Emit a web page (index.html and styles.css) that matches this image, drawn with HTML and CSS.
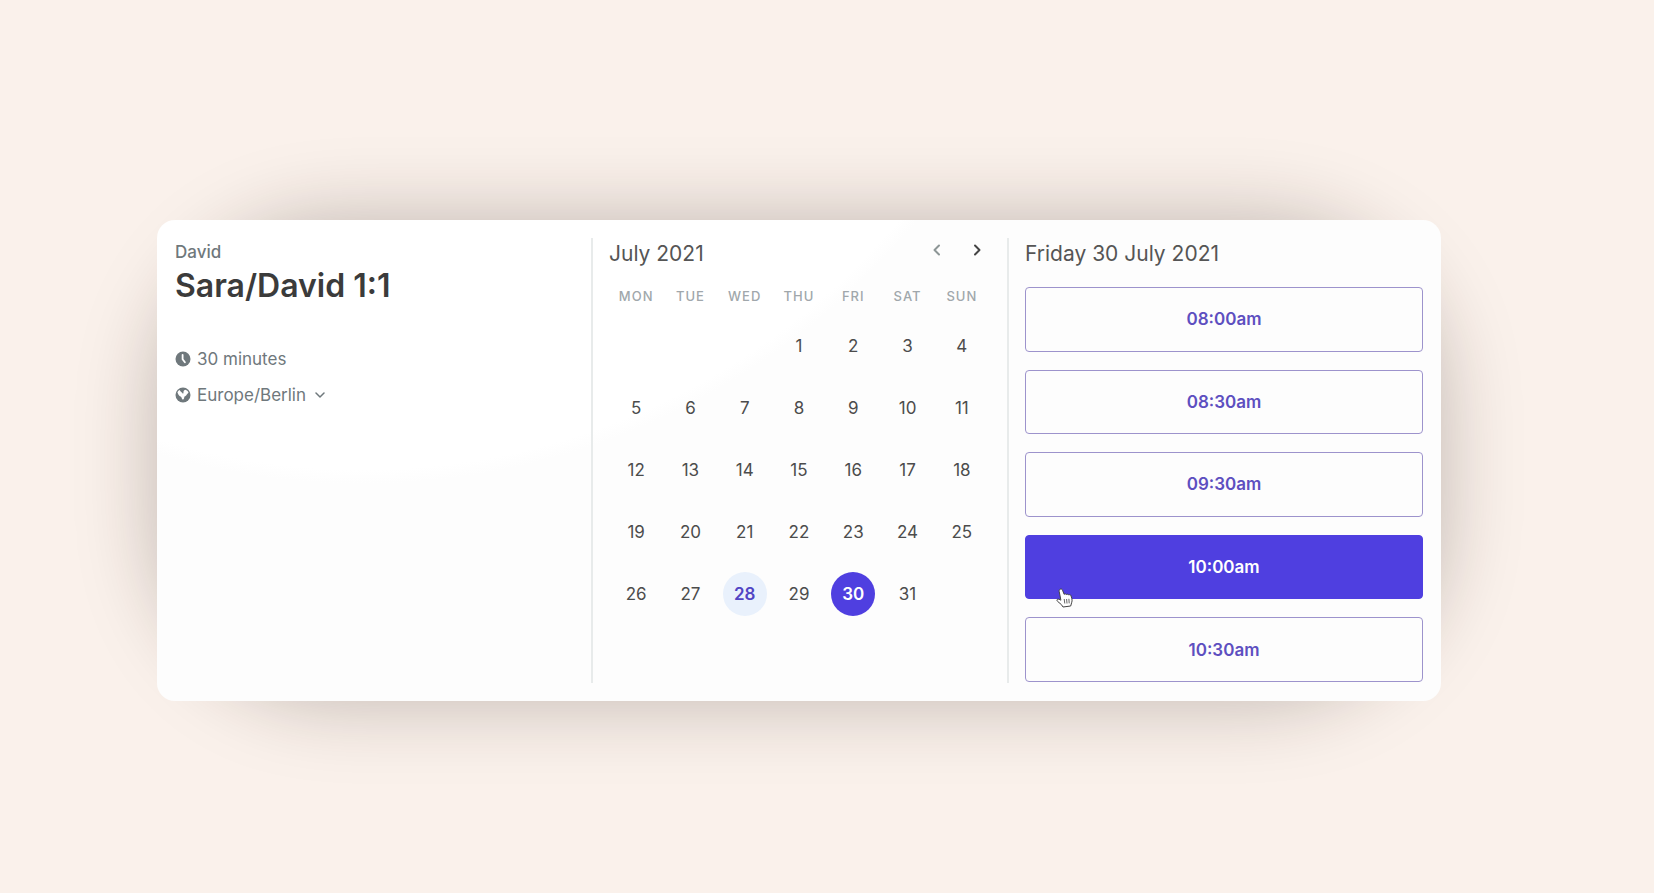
FILE: index.html
```html
<!DOCTYPE html>
<html lang="en">

<head>
  <meta charset="UTF-8">
  <meta name="viewport" content="width=device-width, initial-scale=1.0">
  <title>Sara/David 1:1</title>
  <link rel="stylesheet" href="styles.css">
</head>

<body>
  <main class="booking">
    <section class="details">
      <p class="host">David</p>
      <h1 class="title">Sara/David 1:1</h1>
      <p class="meta">
        <svg class="icon" viewBox="0 0 16 16" aria-hidden="true">
          <circle cx="8" cy="8" r="7.5" fill="currentColor"/>
          <path d="M7.6 3.8v4.4l2.3 3" fill="none" stroke="#fff" stroke-width="1.8" stroke-linecap="round" stroke-linejoin="round"/>
        </svg>
        30 minutes
      </p>
      <div class="meta">
        <svg class="icon" viewBox="0 0 16 16" aria-hidden="true">
          <circle cx="8" cy="8" r="7.5" fill="currentColor"/>
          <path d="M2.4 5.2c.6-1 1.4-1.7 2.3-2.1.4.8 1 1.7 1.8 2.2.7.5 1.3.9 1.5 1.6.5-.8.6-1.5.5-2.2.1-.9.9-1.7 1.9-1.9 1.4.5 2.5 1.4 3.1 2.7-.3.9-1.2 1.2-1.7 2-.5.9-1.3 1.7-2.3 1.9-.4 1.1-.3 2.4-1.3 3.2-1 .1-1.3-1-1.6-1.9-.4-1-1.5-1.2-2.3-1.9-.8-.9-1.5-2.1-1.9-3.6z" fill="#fff"/>
        </svg>
        <label class="zone">
          <select class="zone-select" aria-label="Time zone">
            <option>Europe/Berlin</option>
          </select>
          <svg class="caret" viewBox="0 0 10 10" aria-hidden="true">
            <path d="M1 3l4 4 4-4"/>
          </svg>
        </label>
      </div>
    </section>

    <section class="calendar">
      <header class="calendar-header">
        <h2 class="heading">July 2021</h2>
        <div class="nav">
          <button class="nav-button previous" aria-label="Previous month">
            <svg class="arrow" viewBox="0 0 12 12"><path d="M8 1.5L3.5 6 8 10.5"/></svg>
          </button>
          <button class="nav-button next" aria-label="Next month">
            <svg class="arrow" viewBox="0 0 12 12"><path d="M4 1.5L8.5 6 4 10.5"/></svg>
          </button>
        </div>
      </header>
      <table class="month">
        <thead>
          <tr><th>MON</th><th>TUE</th><th>WED</th><th>THU</th><th>FRI</th><th>SAT</th><th>SUN</th></tr>
        </thead>
        <tbody>
          <tr>
            <td></td>
            <td></td>
            <td></td>
            <td><button class="day">1</button></td>
            <td><button class="day">2</button></td>
            <td><button class="day">3</button></td>
            <td><button class="day">4</button></td>
          </tr>
          <tr>
            <td><button class="day">5</button></td>
            <td><button class="day">6</button></td>
            <td><button class="day">7</button></td>
            <td><button class="day">8</button></td>
            <td><button class="day">9</button></td>
            <td><button class="day">10</button></td>
            <td><button class="day">11</button></td>
          </tr>
          <tr>
            <td><button class="day">12</button></td>
            <td><button class="day">13</button></td>
            <td><button class="day">14</button></td>
            <td><button class="day">15</button></td>
            <td><button class="day">16</button></td>
            <td><button class="day">17</button></td>
            <td><button class="day">18</button></td>
          </tr>
          <tr>
            <td><button class="day">19</button></td>
            <td><button class="day">20</button></td>
            <td><button class="day">21</button></td>
            <td><button class="day">22</button></td>
            <td><button class="day">23</button></td>
            <td><button class="day">24</button></td>
            <td><button class="day">25</button></td>
          </tr>
          <tr>
            <td><button class="day">26</button></td>
            <td><button class="day">27</button></td>
            <td><button class="day today">28</button></td>
            <td><button class="day">29</button></td>
            <td><button class="day selected">30</button></td>
            <td><button class="day">31</button></td>
            <td></td>
          </tr>
        </tbody>
      </table>
    </section>

    <section class="times">
      <h2 class="heading">Friday 30 July 2021</h2>
      <div class="slots">
        <button class="slot">08:00am</button>
        <button class="slot">08:30am</button>
        <button class="slot">09:30am</button>
        <button class="slot active">
          10:00am
          <svg class="pointer" viewBox="0 0 18 20" aria-hidden="true">
            <path d="M4.2 1.2c1-.5 1.9 0 2.3 1l1.7 4.2c.6-.8 1.8-.7 2.2.2.7-.7 1.9-.5 2.3.4.8-.6 2-.3 2.3.8l.9 3c.4 1.5.2 2.7-.3 4l-.9 3.2-7.7 1-1.6-2.4-3.9-3.3c-1.4-1.3.1-2.8 1.5-2.1l1.9 1-1.7-8.7c-.2-1 .1-1.9 1-2.3z" fill="#fff" stroke="#444" stroke-width="1"/>
            <path d="M8.2 11l.6 4.5M10.6 11l.4 4.5M12.9 10.8l.3 4.5" stroke="#666" stroke-width="1" fill="none"/>
          </svg>
        </button>
        <button class="slot">10:30am</button>
      </div>
    </section>
  </main>
</body>

</html>
```

FILE: styles.css
```css
* {
  margin: 0;
  padding: 0;
  box-sizing: border-box;
  font-family: Inter, 'Liberation Sans', sans-serif;
}

body {
  display: grid;
  min-height: 100vh;
  padding: 220px 213px 192px 157px;
  background: #faf1eb;
}

.booking {
  position: relative;
  display: grid;
  grid-template-columns: repeat(3, 1fr);
  padding: 18px;
  border-radius: 18px;
  background: radial-gradient(circle 716px at 16% -94%, #fff 98%, #fdfdfd 100%);
}

/* soft shadow, rounder than the card so it fades out at the corners */
.booking::before {
  content: '';
  position: absolute;
  inset: 0;
  z-index: -1;
  border-radius: 180px;
  box-shadow: 0 0 80px rgba(40, 25, 20, 0.27);
}

button {
  border: none;
  background: none;
  cursor: pointer;
}

/* Details */
.details {
  color: #6f787c;
}

.host {
  font-size: 17px;
  font-weight: 500;
  line-height: 28px;
}

.title {
  margin-bottom: 38px;
  color: #3b3b3b;
  font-size: 32px;
  font-weight: 600;
  line-height: 40px;
}

.meta {
  display: flex;
  align-items: center;
  gap: 6px;
  height: 30px;
  margin-bottom: 6px;
  font-size: 17px;
}

.icon {
  width: 16px;
  height: 16px;
}

.zone {
  display: flex;
  align-items: center;
  gap: 8px;
}

.zone-select {
  appearance: none;
  border: none;
  background: none;
  color: inherit;
  font-size: 17px;
}

.caret {
  width: 10px;
  height: 10px;
}

.caret path,
.arrow path {
  fill: none;
  stroke: currentColor;
  stroke-width: 1.5;
  stroke-linecap: round;
  stroke-linejoin: round;
}

/* Calendar */
.calendar,
.times {
  padding-left: 16px;
  border-left: 2px solid #e8ebeb;
}

.calendar {
  padding-right: 18px;
}

.calendar-header {
  display: flex;
  justify-content: space-between;
}

.heading {
  color: #555;
  font-size: 21px;
  font-weight: 400;
  line-height: 32px;
}

.nav {
  display: flex;
  gap: 16px;
}

.nav-button {
  display: flex;
  justify-content: center;
  align-items: center;
  width: 24px;
  height: 24px;
  color: #444;
}

.nav-button.previous {
  color: #8d9696;
}

.arrow {
  width: 12px;
  height: 12px;
}

.arrow path {
  stroke-width: 2;
}

.month {
  width: 100%;
  margin-top: 7px;
  border-collapse: collapse;
  table-layout: fixed;
}

.month th {
  height: 38px;
  color: #a0a7ab;
  font-size: 13px;
  font-weight: 500;
  letter-spacing: 1px;
}

.month td {
  height: 62px;
  text-align: center;
}

.day {
  width: 44px;
  height: 44px;
  border-radius: 50%;
  color: #4c4c4c;
  font-size: 17px;
}

.day.today {
  background: #e9f1fc;
  color: #5144c4;
  font-weight: 600;
}

.day.selected {
  background: #4f3fe0;
  color: #fff;
  font-weight: 600;
}

/* Time slots */
.times {
  display: flex;
  flex-direction: column;
  gap: 17px;
  padding-bottom: 1px;
}

.slots {
  display: flex;
  flex: 1;
  flex-direction: column;
  gap: 18px;
}

.slot {
  position: relative;
  flex: 1;
  min-height: 64px;
  border: 1px solid #9d93cc;
  border-radius: 4px;
  color: #5d4fc0;
  font-size: 17px;
  font-weight: 600;
}

.slot.active {
  border-color: #4f3fe0;
  background: #4f3fe0;
  color: #fff;
}

.pointer {
  position: absolute;
  bottom: -10px;
  left: 30px;
  width: 18px;
  height: 20px;
}

@media (max-width: 1100px) {
  body {
    padding: 40px;
  }

  .booking {
    grid-template-columns: 1fr;
    gap: 24px;
  }

  .calendar,
  .times {
    padding: 0;
    border: none;
  }
}
```
